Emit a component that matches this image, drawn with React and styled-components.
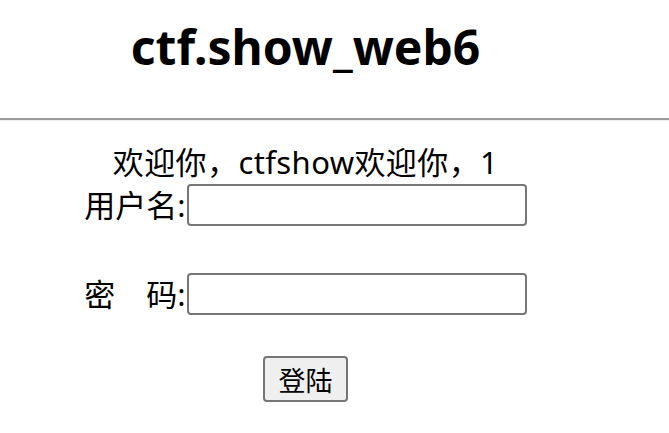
import React from 'react';
import styled, { createGlobalStyle } from 'styled-components';

const GlobalStyle = createGlobalStyle`
  html, body {
    margin: 0;
    padding: 0;
    background: #fff;
  }
  body {
    font-family: "Noto Sans", "Noto Sans CJK SC", sans-serif;
    color: #000;
  }
`;

const Page = styled.div`
  width: 669px;
  height: 433px;
  overflow: hidden;
`;

const Header = styled.header`
  width: 611px;
  height: 118px;
  display: flex;
  justify-content: center;
  align-items: flex-start;
`;

const Title = styled.h1`
  margin: 14px 0 0;
  font-size: 48px;
  font-weight: 700;
  line-height: 66px;
`;

const Rule = styled.hr`
  margin: 0;
  border: none;
  border-top: 2px solid #9a9a9a;
  border-bottom: 1px solid #eeeeee;
`;

const Form = styled.form`
  width: 611px;
  display: flex;
  flex-direction: column;
  align-items: center;
  padding-top: 21px;
`;

const Welcome = styled.div`
  font-size: 31px;
  line-height: 40px;
  height: 40px;
  letter-spacing: 0.4px;
  display: flex;
  align-items: center;
`;

const Row = styled.label`
  display: flex;
  align-items: center;
  font-size: 31px;
  line-height: 42px;
  margin-top: ${(p) => p.$gap}px;
`;

const Label = styled.span`
  white-space: pre;
  margin-right: 1px;
`;

const Input = styled.input`
  box-sizing: border-box;
  width: 340px;
  height: 42px;
  border: 2px solid #767676;
  border-radius: 4px;
  background: #fff;
  font-size: 24px;
  padding: 0 4px;
  outline: none;
`;

const Button = styled.button`
  box-sizing: border-box;
  margin-top: 41px;
  width: 85px;
  height: 46px;
  background: #efefef;
  border: 2px solid #767676;
  border-radius: 4px;
  font-family: "Noto Sans CJK SC", sans-serif;
  font-size: 27px;
  color: #000;
  padding: 0;
`;

export default function App() {
  return (
    <Page>
      <GlobalStyle />
      <Header>
        <Title>ctf.show_web6</Title>
      </Header>
      <Rule />
      <Form onSubmit={(e) => e.preventDefault()}>
        <Welcome>欢迎你，ctfshow欢迎你，1</Welcome>
        <Row $gap={2}>
          <Label>用户名:</Label>
          <Input type="text" name="username" />
        </Row>
        <Row $gap={47}>
          <Label>密　码:</Label>
          <Input type="password" name="password" />
        </Row>
        <Button type="submit">登陆</Button>
      </Form>
    </Page>
  );
}
